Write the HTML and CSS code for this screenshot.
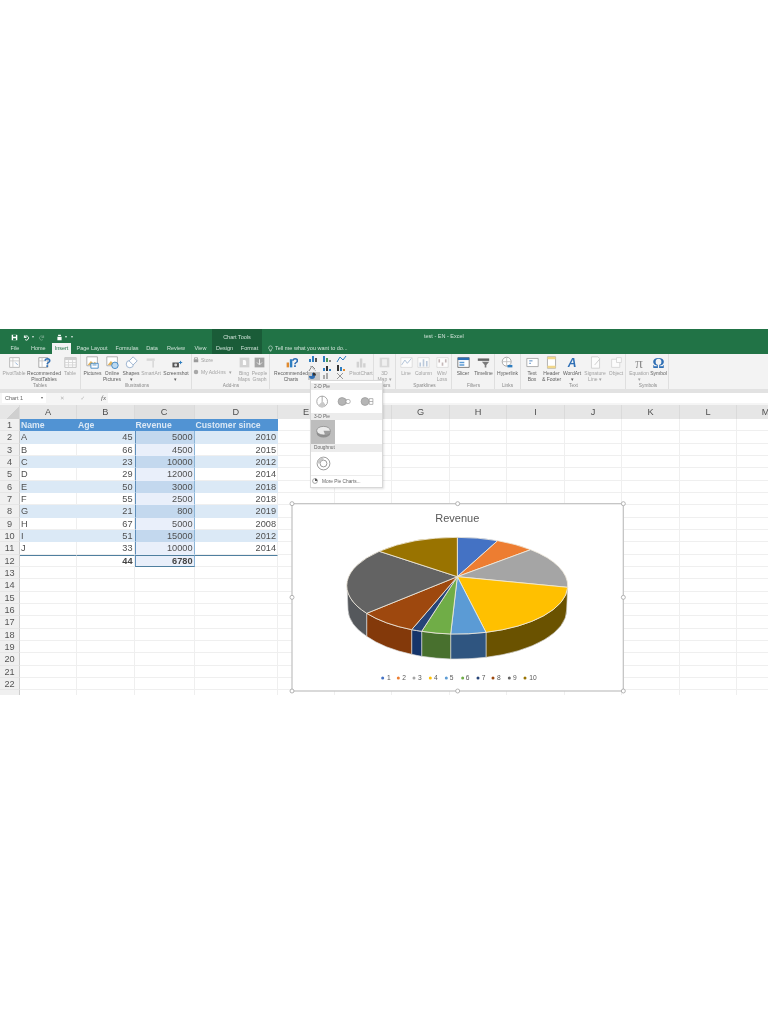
FILE: index.html
```html
<!doctype html>
<html lang="en">

<head>
    <meta charset="UTF-8">
    <title>test - EN - Excel</title>
    <link rel="stylesheet" href="styles.css">
</head>

<body>
    <div class="excel">
        <div class="titlebar">
            <div class="qat">
                <svg class="qat-ico" viewBox="0 0 10 10"><path d="M1 1h7l1 1v7H1z" fill="#fff"/><path d="M3 1h4v3H3zM3 6h4v3H3z" fill="#217346"/></svg>
                <svg class="qat-ico gap-s" viewBox="0 0 10 10"><path d="M2 5a3 3 0 1 1 1 3M2 2v3h3" fill="none" stroke="#fff" stroke-width="1.3"/></svg>
                <span class="qat-dot">▾</span>
                <svg class="qat-ico dim" viewBox="0 0 10 10"><path d="M8 5a3 3 0 1 0-1 3M8 2v3H5" fill="none" stroke="#fff" stroke-width="1"/></svg>
                <svg class="qat-ico gap" viewBox="0 0 10 10"><path d="M3 1h4v2H3zM2 4h6v5H2z" fill="#fff"/></svg>
                <span class="qat-dot">▾</span>
                <span class="qat-dot">▾</span>
            </div>
            <div class="context-label">Chart Tools</div>
            <div class="doc-title">test - EN - Excel</div>
        </div>
        <div class="tabs">
            <span class="tab">File</span>
            <span class="tab home">Home</span>
            <span class="tab active">Insert</span>
            <span class="tab">Page Layout</span>
            <span class="tab">Formulas</span>
            <span class="tab">Data</span>
            <span class="tab">Review</span>
            <span class="tab">View</span>
            <span class="tab context">Design</span>
            <span class="tab context">Format</span>
            <span class="tell">
                <svg class="bulb" viewBox="0 0 8 10"><path d="M4 .8a3 3 0 0 1 1.6 5.5V8H2.4V6.3A3 3 0 0 1 4 .8zM3 9.300h2" fill="none" stroke="#fff" stroke-width=".8"/></svg>
                Tell me what you want to do...
            </span>
        </div>

        <div class="ribbon">
            <div class="group g-tables">
                <div class="tools">
                    <div class="tool w28 faded"><svg class="ico" viewBox="0 0 16 16"><path d="M2 2h12v12H2z" fill="#fff" stroke="#9a9a9a"/><path d="M2 6h12M6 2v12" stroke="#b9b9b9"/><path d="M9 8l3 3" stroke="#5b8fc9"/></svg><span>PivotTable</span></div>
                    <div class="tool w32"><svg class="ico" viewBox="0 0 16 16"><path d="M1 2h11v12H1z" fill="#fff" stroke="#9a9a9a"/><path d="M1 6h11M5 2v12" stroke="#c4c4c4"/><text class="ico-q" x="7" y="14">?</text></svg><span>Recommended<br>PivotTables</span></div>
                    <div class="tool w20 faded"><svg class="ico" viewBox="0 0 16 16"><path d="M1 2h14v12H1z" fill="#fff" stroke="#a8a8a8"/><path d="M1 2h14v3H1z" fill="#c5c5c5"/><path d="M1 8h14M1 11h14M5.500 5v9M10.500 5v9" stroke="#c9c9c9"/></svg><span>Table</span></div>
                </div>
                <div class="group-label">Tables</div>
            </div>

            <div class="group g-illus">
                <div class="tools">
                    <div class="tool w19"><svg class="ico" viewBox="0 0 16 16"><path d="M1 1h13v11H1z" fill="#fff" stroke="#a0a0a0"/><path d="M2 11l4-5 3 3 2-2 3 4z" fill="#e4b35c"/><path d="M6 9h9v6H6z" fill="#fff" stroke="#2f7ec0"/><path d="M8 11h5" stroke="#2f7ec0"/></svg><span>Pictures</span></div>
                    <div class="tool w20"><svg class="ico" viewBox="0 0 16 16"><path d="M1 1h13v11H1z" fill="#fff" stroke="#a0a0a0"/><path d="M2 11l4-5 3 3 2-2 3 4z" fill="#e4b35c"/><circle cx="11" cy="11.500" r="4" fill="#bcd9f0" stroke="#2f7ec0"/></svg><span>Online<br>Pictures</span></div>
                    <div class="tool w18"><svg class="ico" viewBox="0 0 16 16"><circle cx="6" cy="10" r="4.500" fill="#fff" stroke="#8aa6c8"/><path d="M10 1l5 5-5 5-5-5z" fill="#fff" stroke="#8aa6c8"/></svg><span>Shapes<br>▾</span></div>
                    <div class="tool w22 faded"><svg class="ico" viewBox="0 0 16 16"><path d="M2 3h10v3H2z" fill="#cfcfcf"/><path d="M9 6h2v8H9z" fill="#cfcfcf"/></svg><span>SmartArt</span></div>
                    <div class="tool w28"><svg class="ico" viewBox="0 0 16 16"><path d="M3 8h8v6H3z" fill="#555"/><circle cx="7" cy="11" r="1.800" fill="#ddd"/><path d="M13 6v4M11 8h4" stroke="#2f7ec0" stroke-width="1.200"/></svg><span>Screenshot<br>▾</span></div>
                </div>
                <div class="group-label">Illustrations</div>
            </div>

            <div class="group g-addins">
                <div class="tools">
                    <div class="addin-col w43">
                        <span class="addin"><svg class="mini" viewBox="0 0 8 8"><path d="M1 3h6v4H1z" fill="#9a9a9a"/><path d="M2 3V1h4v2" fill="none" stroke="#9a9a9a"/></svg>Store</span>
                        <span class="addin"><svg class="mini" viewBox="0 0 8 8"><circle cx="4" cy="4" r="3" fill="#a8a8a8"/></svg>My Add-ins  ▾</span>
                    </div>
                    <div class="tool w16 faded"><svg class="ico" viewBox="0 0 16 16"><path d="M2 2h12v12H2z" fill="#c7c7c7"/><path d="M6 5h3l1 2v4H6z" fill="#fff"/></svg><span>Bing<br>Maps</span></div>
                    <div class="tool w15 faded"><svg class="ico" viewBox="0 0 16 16"><path d="M2 2h12v12H2z" fill="#8b8b8b"/><path d="M8 4v6M5 8l3 3 3-3" stroke="#fff" fill="none"/></svg><span>People<br>Graph</span></div>
                </div>
                <div class="group-label">Add-ins</div>
            </div>

            <div class="group g-charts">
                <div class="tools">
                    <div class="tool w30"><svg class="ico" viewBox="0 0 16 16"><path d="M2 8h3v6H2z" fill="#e08a2e"/><path d="M6 4h3v10H6z" fill="#2f7ec0"/><text class="ico-q" x="8" y="13">?</text></svg><span>Recommended<br>Charts</span></div>
                    <div class="chart-btns">
                        <svg class="chart-btn" viewBox="0 0 12 8"><path d="M1 4h2v3H1zM4 1h2v6H4z" fill="#2f7ec0"/><path d="M7 3h2v4H7z" fill="#555"/></svg>
                        <svg class="chart-btn" viewBox="0 0 12 8"><path d="M1 1h2v6H1z" fill="#2f7ec0"/><path d="M4 3h2v4H4z" fill="#4a9a5a"/><path d="M7 5h2v2H7z" fill="#888"/></svg>
                        <svg class="chart-btn" viewBox="0 0 12 8"><path d="M1 7l3-5 3 3 3-4" fill="none" stroke="#2f7ec0"/></svg>
                        <svg class="chart-btn" viewBox="0 0 12 8"><path d="M1 7l3-5 3 3" fill="none" stroke="#888"/><path d="M2 2l6 5" stroke="#bbb"/></svg>
                        <svg class="chart-btn" viewBox="0 0 12 8"><path d="M1 4h2v3H1z" fill="#2f7ec0"/><path d="M4 2h2v5H4z" fill="#333"/><path d="M7 5h2v2H7z" fill="#2f7ec0"/></svg>
                        <svg class="chart-btn" viewBox="0 0 12 8"><path d="M1 1h2v6H1z" fill="#333"/><path d="M4 3h2v4H4z" fill="#2f7ec0"/><path d="M7 5h2v2H7z" fill="#e08a2e"/></svg>
                        <svg class="chart-btn on" viewBox="0 0 12 8"><path d="M4 4V1a3 3 0 1 1-3 3z" fill="#2f6fb5"/><path d="M5 0.500a3 3 0 0 1 3 3H5z" fill="#333"/></svg>
                        <svg class="chart-btn" viewBox="0 0 12 8"><path d="M1 7V3h2v4zM4 7V1h2v6z" fill="#aaa"/></svg>
                        <svg class="chart-btn" viewBox="0 0 12 8"><path d="M1 1l6 6M7 1L1 7" stroke="#999"/></svg>
                    </div>
                    <div class="tool w20 faded"><svg class="ico" viewBox="0 0 16 16"><path d="M2 7h3v7H2zM6 3h3v11H6zM10 9h3v5h-3z" fill="#c8c8c8"/></svg><span>PivotChart</span></div>
                </div>
                <div class="group-label"></div>
            </div>

            <div class="group g-tours">
                <div class="tools">
                    <div class="tool w22 faded"><svg class="ico" viewBox="0 0 16 16"><path d="M2 2h12v12H2z" fill="#d0d0d0"/><path d="M5 4h6v8H5z" fill="#efefef"/></svg><span>3D<br>Map ▾</span></div>
                </div>
                <div class="group-label">Tours</div>
            </div>

            <div class="group g-spark">
                <div class="tools">
                    <div class="tool w16 faded"><svg class="ico" viewBox="0 0 16 16"><path d="M1 2h14v12H1z" fill="#fff" stroke="#d0d0d0"/><path d="M2 11l4-6 3 4 5-6" fill="none" stroke="#8aa6c8"/></svg><span>Line</span></div>
                    <div class="tool w19 faded"><svg class="ico" viewBox="0 0 16 16"><path d="M1 2h14v12H1z" fill="#fff" stroke="#d0d0d0"/><path d="M3 8h2v5H3zM7 4h2v9H7zM11 6h2v7h-2z" fill="#a9bcd3"/></svg><span>Column</span></div>
                    <div class="tool w18 faded"><svg class="ico" viewBox="0 0 16 16"><path d="M1 2h14v12H1z" fill="#fff" stroke="#d0d0d0"/><path d="M3 4h2v4H3zM7 8h2v4H7zM11 4h2v4h-2z" fill="#b5a3a3"/></svg><span>Win/<br>Loss</span></div>
                </div>
                <div class="group-label">Sparklines</div>
            </div>

            <div class="group g-filters">
                <div class="tools">
                    <div class="tool w20"><svg class="ico" viewBox="0 0 16 16"><path d="M1 2h14v12H1z" fill="#fff" stroke="#666"/><path d="M1 2h14v3H1z" fill="#2f6fb5"/><path d="M3 7h6v2H3zM3 10h6v2H3z" fill="#5b9bd5"/></svg><span>Slicer</span></div>
                    <div class="tool w21"><svg class="ico" viewBox="0 0 16 16"><path d="M1 3h14v3H1z" fill="#666"/><path d="M6 7h9l-3.500 4v3h-2v-3z" fill="#7a7a7a"/></svg><span>Timeline</span></div>
                </div>
                <div class="group-label">Filters</div>
            </div>

            <div class="group g-links">
                <div class="tools">
                    <div class="tool w25"><svg class="ico" viewBox="0 0 16 16"><circle cx="7" cy="7" r="5.500" fill="#fff" stroke="#999"/><path d="M1.500 7h11M7 1.500v11" stroke="#bbb"/><path d="M8 11h6v3H8z" fill="#2f7ec0"/></svg><span>Hyperlink</span></div>
                </div>
                <div class="group-label">Links</div>
            </div>

            <div class="group g-text">
                <div class="tools">
                    <div class="tool w20"><svg class="ico" viewBox="0 0 16 16"><path d="M1 3h14v10H1z" fill="#fff" stroke="#a0a0a0"/><path d="M4 6h4M4 9h2" stroke="#2f6fb5"/></svg><span>Text<br>Box</span></div>
                    <div class="tool w19"><svg class="ico" viewBox="0 0 16 16"><path d="M3 1h10v14H3z" fill="#fff" stroke="#a0a0a0"/><path d="M3 1h10v3H3z" fill="#f1d78a"/><path d="M3 12h10v3H3z" fill="#f1d78a"/></svg><span>Header<br>&amp; Footer</span></div>
                    <div class="tool w22"><svg class="ico" viewBox="0 0 16 16"><text class="ico-a" x="2" y="13">A</text></svg><span>WordArt<br>▾</span></div>
                    <div class="tool w24 faded"><svg class="ico" viewBox="0 0 16 16"><path d="M3 1h8l2 2v12H3z" fill="#fff" stroke="#bdbdbd"/><path d="M7 11l6-7" stroke="#b5b5b5"/></svg><span>Signature<br>Line ▾</span></div>
                    <div class="tool w18 faded"><svg class="ico" viewBox="0 0 16 16"><path d="M2 4h10v10H2z" fill="#fff" stroke="#c9c9c9"/><path d="M8 2h6v6H8z" fill="#fff" stroke="#c9c9c9"/></svg><span>Object</span></div>
                </div>
                <div class="group-label">Text</div>
            </div>

            <div class="group g-symbols">
                <div class="tools">
                    <div class="tool w22 faded"><span class="big-sym pi">π</span><span>Equation<br>▾</span></div>
                    <div class="tool w17"><span class="big-sym omega">Ω</span><span>Symbol</span></div>
                </div>
                <div class="group-label">Symbols</div>
            </div>
        </div>

        <div class="formula">
            <span class="namebox">Chart 1<i>▾</i></span>
            <span class="fx-btns"><b>✕</b><b>✓</b><em>fx</em></span>
            <span class="fx-input"></span>
        </div>

        <div class="sheet">
            <div class="row head"><span class="corner"></span><span>A</span><span>B</span><span class="sel">C</span><span>D</span><span>E</span><span>F</span><span>G</span><span>H</span><span>I</span><span>J</span><span>K</span><span>L</span><span>M</span></div>
            <div class="row tablehead"><span class="num">1</span><span>Name</span><span>Age</span><span class="rev">Revenue</span><span>Customer since</span><span></span><span></span><span></span><span></span><span></span><span></span><span></span><span></span><span></span></div>
            <div class="row band"><span class="num">2</span><span>A</span><span class="val">45</span><span class="val rev">5000</span><span class="val">2010</span><span></span><span></span><span></span><span></span><span></span><span></span><span></span><span></span><span></span></div>
            <div class="row"><span class="num">3</span><span>B</span><span class="val">66</span><span class="val rev">4500</span><span class="val">2015</span><span></span><span></span><span></span><span></span><span></span><span></span><span></span><span></span><span></span></div>
            <div class="row band"><span class="num">4</span><span>C</span><span class="val">23</span><span class="val rev">10000</span><span class="val">2012</span><span></span><span></span><span></span><span></span><span></span><span></span><span></span><span></span><span></span></div>
            <div class="row"><span class="num">5</span><span>D</span><span class="val">29</span><span class="val rev">12000</span><span class="val">2014</span><span></span><span></span><span></span><span></span><span></span><span></span><span></span><span></span><span></span></div>
            <div class="row band"><span class="num">6</span><span>E</span><span class="val">50</span><span class="val rev">3000</span><span class="val">2018</span><span></span><span></span><span></span><span></span><span></span><span></span><span></span><span></span><span></span></div>
            <div class="row"><span class="num">7</span><span>F</span><span class="val">55</span><span class="val rev">2500</span><span class="val">2018</span><span></span><span></span><span></span><span></span><span></span><span></span><span></span><span></span><span></span></div>
            <div class="row band"><span class="num">8</span><span>G</span><span class="val">21</span><span class="val rev">800</span><span class="val">2019</span><span></span><span></span><span></span><span></span><span></span><span></span><span></span><span></span><span></span></div>
            <div class="row"><span class="num">9</span><span>H</span><span class="val">67</span><span class="val rev">5000</span><span class="val">2008</span><span></span><span></span><span></span><span></span><span></span><span></span><span></span><span></span><span></span></div>
            <div class="row band"><span class="num">10</span><span>I</span><span class="val">51</span><span class="val rev">15000</span><span class="val">2012</span><span></span><span></span><span></span><span></span><span></span><span></span><span></span><span></span><span></span></div>
            <div class="row"><span class="num">11</span><span>J</span><span class="val">33</span><span class="val rev">10000</span><span class="val">2014</span><span></span><span></span><span></span><span></span><span></span><span></span><span></span><span></span><span></span></div>
            <div class="row total"><span class="num">12</span><span></span><span class="val">44</span><span class="val rev">6780</span><span></span><span></span><span></span><span></span><span></span><span></span><span></span><span></span><span></span><span></span></div>
            <div class="row"><span class="num">13</span><span></span><span></span><span></span><span></span><span></span><span></span><span></span><span></span><span></span><span></span><span></span><span></span><span></span></div>
            <div class="row"><span class="num">14</span><span></span><span></span><span></span><span></span><span></span><span></span><span></span><span></span><span></span><span></span><span></span><span></span><span></span></div>
            <div class="row"><span class="num">15</span><span></span><span></span><span></span><span></span><span></span><span></span><span></span><span></span><span></span><span></span><span></span><span></span><span></span></div>
            <div class="row"><span class="num">16</span><span></span><span></span><span></span><span></span><span></span><span></span><span></span><span></span><span></span><span></span><span></span><span></span><span></span></div>
            <div class="row"><span class="num">17</span><span></span><span></span><span></span><span></span><span></span><span></span><span></span><span></span><span></span><span></span><span></span><span></span><span></span></div>
            <div class="row"><span class="num">18</span><span></span><span></span><span></span><span></span><span></span><span></span><span></span><span></span><span></span><span></span><span></span><span></span><span></span></div>
            <div class="row"><span class="num">19</span><span></span><span></span><span></span><span></span><span></span><span></span><span></span><span></span><span></span><span></span><span></span><span></span><span></span></div>
            <div class="row"><span class="num">20</span><span></span><span></span><span></span><span></span><span></span><span></span><span></span><span></span><span></span><span></span><span></span><span></span><span></span></div>
            <div class="row"><span class="num">21</span><span></span><span></span><span></span><span></span><span></span><span></span><span></span><span></span><span></span><span></span><span></span><span></span><span></span></div>
            <div class="row"><span class="num">22</span><span></span><span></span><span></span><span></span><span></span><span></span><span></span><span></span><span></span><span></span><span></span><span></span><span></span></div>
            <div class="row"><span class="num"></span><span></span><span></span><span></span><span></span><span></span><span></span><span></span><span></span><span></span><span></span><span></span><span></span><span></span></div>
        </div>

        <!-- pie chart dropdown, opened over the ribbon and sheet -->
        <div class="pie-menu">
            <div class="menu-head">2-D Pie</div>
            <div class="menu-icons tall">
                <svg class="pie-ico" viewBox="0 0 20 20"><circle cx="10" cy="10" r="7.500" fill="#fff" stroke="#8a8a8a"/><path d="M10 10V2.500M10 10l5 6" stroke="#8a8a8a"/><path d="M10 10l5 6a7.500 7.500 0 0 1-11 0z" fill="#c9c9c9"/></svg>
                <svg class="pie-ico" viewBox="0 0 20 20"><circle cx="7" cy="10" r="5.500" fill="#b5b5b5" stroke="#9a9a9a"/><circle cx="15.500" cy="10" r="3" fill="#fff" stroke="#9a9a9a"/><path d="M11 6l3 2M11 14l3-2" stroke="#9a9a9a"/></svg>
                <svg class="pie-ico" viewBox="0 0 20 20"><circle cx="7" cy="10" r="5.500" fill="#b5b5b5" stroke="#9a9a9a"/><path d="M13 6h5v8h-5z" fill="#fff" stroke="#9a9a9a"/><path d="M13 10h5" stroke="#9a9a9a"/></svg>
            </div>
            <div class="menu-head">3-D Pie</div>
            <div class="menu-icons">
                <span class="picked"><svg class="pie-ico" viewBox="0 0 20 20"><path d="M2 12v-3h16v3a8 5 0 0 1-16 0z" fill="#8f8f8f"/><ellipse cx="10" cy="9" rx="8" ry="5" fill="#ececec" stroke="#7a7a7a" stroke-width=".7"/><path d="M10 9l8 0a8 5 0 0 1-6 5z" fill="#9c9c9c"/></svg></span>
            </div>
            <div class="menu-head donut">Doughnut</div>
            <div class="menu-icons tall">
                <svg class="pie-ico" viewBox="0 0 20 20"><circle cx="10" cy="10" r="7.500" fill="#fff" stroke="#8a8a8a"/><circle cx="10" cy="10" r="4" fill="#fff" stroke="#8a8a8a"/><path d="M10 2.500a7.500 7.500 0 0 0-7.500 7.500H6a4 4 0 0 1 4-4z" fill="#c9c9c9"/></svg>
            </div>
            <div class="menu-more"><svg class="more-ico" viewBox="0 0 8 8"><circle cx="4" cy="4" r="3.200" fill="#fff" stroke="#8a8a8a"/><path d="M4 4V.8A3.200 3.200 0 0 1 7.200 4z" fill="#555"/></svg>More Pie Charts...</div>
        </div>

        <!-- chart floats over the cells -->
        <div class="chart">
            <svg class="chart-svg" viewBox="0 0 1035 615">
                <rect class="frame" x="21" y="26" width="994" height="562"/>
                <text class="chart-title" x="517" y="81">Revenue</text>

                <path class="wall" fill="#6a5200" d="M603 412A331 145 0 0 0 848 277L845 345A328 147 0 0 1 603 487Z"/>
                <path class="wall" fill="#2f5580" d="M497 417A331 145 0 0 0 603 412V487A328 147 0 0 1 497 492Z"/>
                <path class="wall" fill="#48702e" d="M410 409A331 145 0 0 0 497 417V492A328 147 0 0 1 410 484Z"/>
                <path class="wall" fill="#15346a" d="M380 404A331 145 0 0 0 410 409V484A328 147 0 0 1 380 478Z"/>
                <path class="wall" fill="#83390a" d="M245 355A331 145 0 0 0 380 404V478A328 147 0 0 1 245 424Z"/>
                <path class="wall" fill="#55585c" d="M186 272A331 145 0 0 0 245 355V424A328 147 0 0 1 189 345Z"/>

                <path class="slice" fill="#4472c4" d="M517 245V127A331 145 0 0 1 638 137Z"/>
                <path class="slice" fill="#ed7d31" d="M517 245L638 137A331 145 0 0 1 737 164Z"/>
                <path class="slice" fill="#a5a5a5" d="M517 245L737 164A331 145 0 0 1 848 277Z"/>
                <path class="slice" fill="#ffc000" d="M517 245L848 277A331 145 0 0 1 603 412Z"/>
                <path class="slice" fill="#5b9bd5" d="M517 245L603 412A331 145 0 0 1 497 417Z"/>
                <path class="slice" fill="#70ad47" d="M517 245L497 417A331 145 0 0 1 410 409Z"/>
                <path class="slice" fill="#264478" d="M517 245L410 409A331 145 0 0 1 380 404Z"/>
                <path class="slice" fill="#9e480e" d="M517 245L380 404A331 145 0 0 1 245 355Z"/>
                <path class="slice" fill="#636363" d="M517 245L245 355A331 145 0 0 1 283 169Z"/>
                <path class="slice" fill="#997300" d="M517 245L283 169A331 145 0 0 1 517 127Z"/>

                <g class="legend">
                    <circle cx="293" cy="549" r="4.500" fill="#4472c4"/><text x="306" y="556">1</text>
                    <circle cx="340" cy="549" r="4.500" fill="#ed7d31"/><text x="352" y="556">2</text>
                    <circle cx="387" cy="549" r="4.500" fill="#a5a5a5"/><text x="399" y="556">3</text>
                    <circle cx="436" cy="549" r="4.500" fill="#ffc000"/><text x="447" y="556">4</text>
                    <circle cx="484" cy="549" r="4.500" fill="#5b9bd5"/><text x="494" y="556">5</text>
                    <circle cx="533" cy="549" r="4.500" fill="#70ad47"/><text x="542" y="556">6</text>
                    <circle cx="579" cy="549" r="4.500" fill="#264478"/><text x="590" y="556">7</text>
                    <circle cx="624" cy="549" r="4.500" fill="#9e480e"/><text x="636" y="556">8</text>
                    <circle cx="673" cy="549" r="4.500" fill="#636363"/><text x="684" y="556">9</text>
                    <circle cx="720" cy="549" r="4.500" fill="#997300"/><text x="733" y="556">10</text>
                </g>

                <circle class="handle" cx="21" cy="26" r="6"/>
                <circle class="handle" cx="518" cy="26" r="6"/>
                <circle class="handle" cx="1015" cy="26" r="6"/>
                <circle class="handle" cx="21" cy="307" r="6"/>
                <circle class="handle" cx="1015" cy="307" r="6"/>
                <circle class="handle" cx="21" cy="588" r="6"/>
                <circle class="handle" cx="518" cy="588" r="6"/>
                <circle class="handle" cx="1015" cy="588" r="6"/>
            </svg>
        </div>
    </div>
</body>

</html>
```

FILE: styles.css
```css
* {
    margin: 0;
    padding: 0;
    box-sizing: border-box;
}

body {
    background-color: #fff;
    min-height: 1024px;
    font-family: "Liberation Sans", Arial, sans-serif;
    color: #444;
}

.excel {
    position: relative;
    margin-top: 329px;
    height: 366px;
    overflow: hidden;
    filter: blur(0.55px);
}

/* title bar and tabs */
.titlebar {
    display: flex;
    height: 14px;
    background-color: #217346;
    color: #cfe2d8;
    font-size: 5.500px;
}

.qat {
    display: flex;
    align-items: center;
    width: 212px;
    padding: 2px 0 0 11px;
    gap: 2px;
}

.qat-ico {
    width: 7px;
    height: 7px;
}

.qat-ico.gap-s {
    margin-left: 3px;
}

.qat-ico.dim {
    opacity: 0.4;
}

.qat-ico.gap {
    margin-left: 9px;
}

.qat-dot {
    font-size: 3.500px;
    margin-right: 2px;
}

.context-label {
    width: 50px;
    background-color: #1a5c38;
    text-align: center;
    line-height: 17px;
}

.doc-title {
    margin-left: 162px;
    line-height: 14px;
}

.tabs {
    display: grid;
    grid-template-columns: 30px 22px 19px 42px 28px 22px 26px 23px 25px 25px auto;
    height: 11px;
    background-color: #217346;
    color: #cfe2d8;
    font-size: 5.500px;
    line-height: 11px;
}

.tab {
    text-align: center;
}

.tab.home {
    text-align: left;
    padding-left: 1px;
}

.tab.active {
    background-color: #f3f3f3;
    color: #217346;
}

.tab.context {
    background-color: #1a5c38;
}

.tell {
    display: flex;
    align-items: center;
    gap: 2px;
    padding-left: 6px;
}

.bulb {
    width: 5px;
    height: 7px;
}

/* ribbon */
.ribbon {
    display: flex;
    height: 35px;
    background-color: #f3f3f3;
    color: #5e5e5e;
    font-size: 5px;
    line-height: 6px;
}

.group {
    display: flex;
    flex-direction: column;
    border-right: 1px solid #dfdfdf;
}

.g-tables { width: 81px; }
.g-illus { width: 111px; padding-left: 2px; }
.g-addins { width: 78px; padding-left: 1px; }
.g-charts { width: 104px; padding-left: 6px; }
.g-tours { width: 22px; }
.g-spark { width: 56px; padding-left: 2px; }
.g-filters { width: 43px; padding-left: 1px; }
.g-links { width: 26px; }
.g-text { width: 105px; padding-left: 1px; }
.g-symbols { width: 43px; padding-left: 2px; }

.tools {
    display: flex;
    flex: 1;
    min-height: 0;
}

.group-label {
    height: 7px;
    text-align: center;
    color: #8a8a8a;
    font-size: 4.800px;
    line-height: 7px;
}

.tool {
    display: flex;
    flex-direction: column;
    align-items: center;
    padding-top: 2px;
    text-align: center;
    white-space: nowrap;
}

.tool.faded {
    color: #a2a2a2;
}

.tool.faded .ico {
    opacity: 0.75;
}

.ico {
    flex: none;
    width: 13px;
    height: 13px;
    margin-bottom: 1px;
}

.ico-q {
    font-size: 15px;
    font-weight: bold;
    fill: #2f6fb5;
}

.ico-a {
    font-size: 15px;
    font-style: italic;
    font-weight: bold;
    fill: #2f6fb5;
}

.w15 { width: 15px; }
.w16 { width: 16px; }
.w17 { width: 17px; }
.w18 { width: 18px; }
.w19 { width: 19px; }
.w20 { width: 20px; }
.w21 { width: 21px; }
.w22 { width: 22px; }
.w24 { width: 24px; }
.w25 { width: 25px; }
.w28 { width: 28px; }
.w30 { width: 30px; }
.w32 { width: 32px; }
.w43 { width: 43px; }

.addin-col {
    display: flex;
    flex-direction: column;
    gap: 6px;
    padding-top: 3px;
    color: #a2a2a2;
}

.addin {
    display: flex;
    align-items: center;
    gap: 2px;
    white-space: pre;
}

.mini {
    width: 6px;
    height: 6px;
}

.chart-btns {
    display: grid;
    grid-template-columns: repeat(3, 14px);
    grid-auto-rows: 8.500px;
    width: 45px;
    padding: 1px 0 0 2px;
}

.chart-btn {
    width: 12px;
    height: 8px;
}

.chart-btn.on {
    background-color: #c6c6c6;
}

.big-sym {
    height: 14px;
    font-size: 15px;
    line-height: 14px;
    font-family: "Liberation Serif", serif;
}

.pi {
    color: #8c8c8c;
}

.omega {
    color: #2f6fb5;
    font-weight: bold;
}

/* formula bar */
.formula {
    display: flex;
    height: 14px;
    border-top: 4px solid #e2e2e2;
    background-color: #f5f5f5;
    font-size: 5.500px;
    line-height: 10px;
}

.namebox {
    display: flex;
    justify-content: space-between;
    width: 44px;
    margin-left: 2px;
    padding: 0 3px;
    background-color: #fff;
    color: #666;
}

.namebox i {
    font-style: normal;
    font-size: 4px;
}

.fx-btns {
    display: flex;
    justify-content: space-between;
    width: 46px;
    margin-left: 14px;
    color: #b5b5b5;
}

.fx-btns b {
    font-family: "DejaVu Sans", sans-serif;
    font-weight: normal;
}

.fx-btns em {
    color: #666;
    font-family: "Liberation Serif", serif;
    font-size: 7px;
}

.fx-input {
    flex: 1;
    margin-left: 2px;
    background-color: #fff;
}

/* sheet */
.sheet {
    padding-top: 2px;
    background-color: #f5f5f5;
    font-size: 9.200px;
    color: #4f4f4f;
}

.row {
    display: grid;
    grid-template-columns: 20px 57px 57.500px 60px 83.500px 57px 57px 58px 57px 58px 57px 58px 57px 58px;
    height: 12.330px;
    line-height: 12.330px;
    background-color: #fff;
}

.row > span {
    padding: 0 1px;
    border-right: 1px solid #efefef;
    border-bottom: 1px solid #efefef;
    white-space: nowrap;
    overflow: hidden;
}

.row .num {
    background-color: #f0f0f0;
    border-right-color: #cdcdcd;
    border-bottom-color: #e6e6e6;
    text-align: center;
    padding: 0;
    color: #555;
}

.row .val {
    text-align: right;
}

.row.head {
    height: 14px;
    line-height: 14px;
}

.row.head > span {
    background-color: #e6e6e6;
    border-color: #dadada;
    border-bottom: none;
    text-align: center;
}

.row.head .sel {
    background-color: #e0e0e0;
}

.row.head .corner {
    background: linear-gradient(135deg, #e6e6e6 62%, #cfcfcf 62%);
}

.tablehead > span:nth-child(n+2):nth-child(-n+5) {
    background-color: #5193d3;
    border-color: #5193d3;
    color: #dbe8f5;
    font-size: 8.700px;
    font-weight: bold;
}

.tablehead > .rev:nth-child(n) {
    background-color: #5a7fc2;
    border-bottom-color: #d9708e;
}

.band > span:nth-child(n+2):nth-child(-n+5) {
    background-color: #dbe9f6;
    border-color: #dbe9f6;
}

.row > .val.rev {
    background-color: #e9effa;
    border-left: 1px solid #5f8fbb;
    border-right: 1px solid #8db6d8;
    border-bottom-color: #e9effa;
}

.band > .val.rev:nth-child(n) {
    background-color: #c3d8ee;
    border-bottom-color: #c3d8ee;
    border-left-color: #5f8fbb;
    border-right-color: #8db6d8;
}

.total > span:nth-child(n+2):nth-child(-n+5) {
    border-top: 1px solid #4f7f9f;
    font-weight: bold;
    color: #444;
    line-height: 10.500px;
}

.total > .val.rev {
    border-bottom: 1px solid #4f7f9f;
}

/* pie menu */
.pie-menu {
    position: absolute;
    left: 310px;
    top: 51px;
    z-index: 2;
    width: 73px;
    padding-top: 2px;
    background-color: #fff;
    border: 1px solid #d8d8d8;
    box-shadow: 1px 1px 2px rgba(0, 0, 0, 0.12);
    color: #666;
    font-size: 4.800px;
}

.menu-head {
    height: 7px;
    padding-left: 3px;
    background-color: #ececec;
    line-height: 7px;
}

.menu-head.donut {
    height: 8px;
    line-height: 8px;
}

.menu-icons {
    display: flex;
    align-items: center;
    height: 24.500px;
}

.menu-icons.tall {
    height: 22.500px;
}

.menu-icons.tall svg:first-child {
    margin-left: 4px;
}

.pie-ico {
    width: 17px;
    height: 17px;
    margin-right: 8px;
}

.picked {
    display: flex;
    align-items: center;
    justify-content: center;
    width: 24px;
    height: 24.500px;
    background-color: #bdbdbd;
}

.picked .pie-ico {
    margin: 0;
}

.menu-more {
    display: flex;
    align-items: center;
    gap: 4px;
    height: 12px;
    padding-left: 1px;
    border-top: 1px solid #ececec;
}

.more-ico {
    width: 6px;
    height: 6px;
}

/* chart */
.chart {
    position: absolute;
    left: 285px;
    top: 166px;
    z-index: 1;
    width: 345px;
    height: 205px;
}

.chart-svg {
    display: block;
    width: 345px;
    height: 205px;
}

.frame {
    fill: #fff;
    stroke: #c6c6c6;
    stroke-width: 4;
}

.chart-title {
    font-size: 33px;
    fill: #595959;
    text-anchor: middle;
}

.wall {
    stroke: #d9d9d9;
    stroke-width: 2;
}

.slice {
    stroke: #efe9dc;
    stroke-width: 2.500;
    stroke-linejoin: round;
}

.legend text {
    font-size: 20px;
    fill: #595959;
}

.handle {
    fill: #fff;
    stroke: #a6a6a6;
    stroke-width: 2.500;
}
```
